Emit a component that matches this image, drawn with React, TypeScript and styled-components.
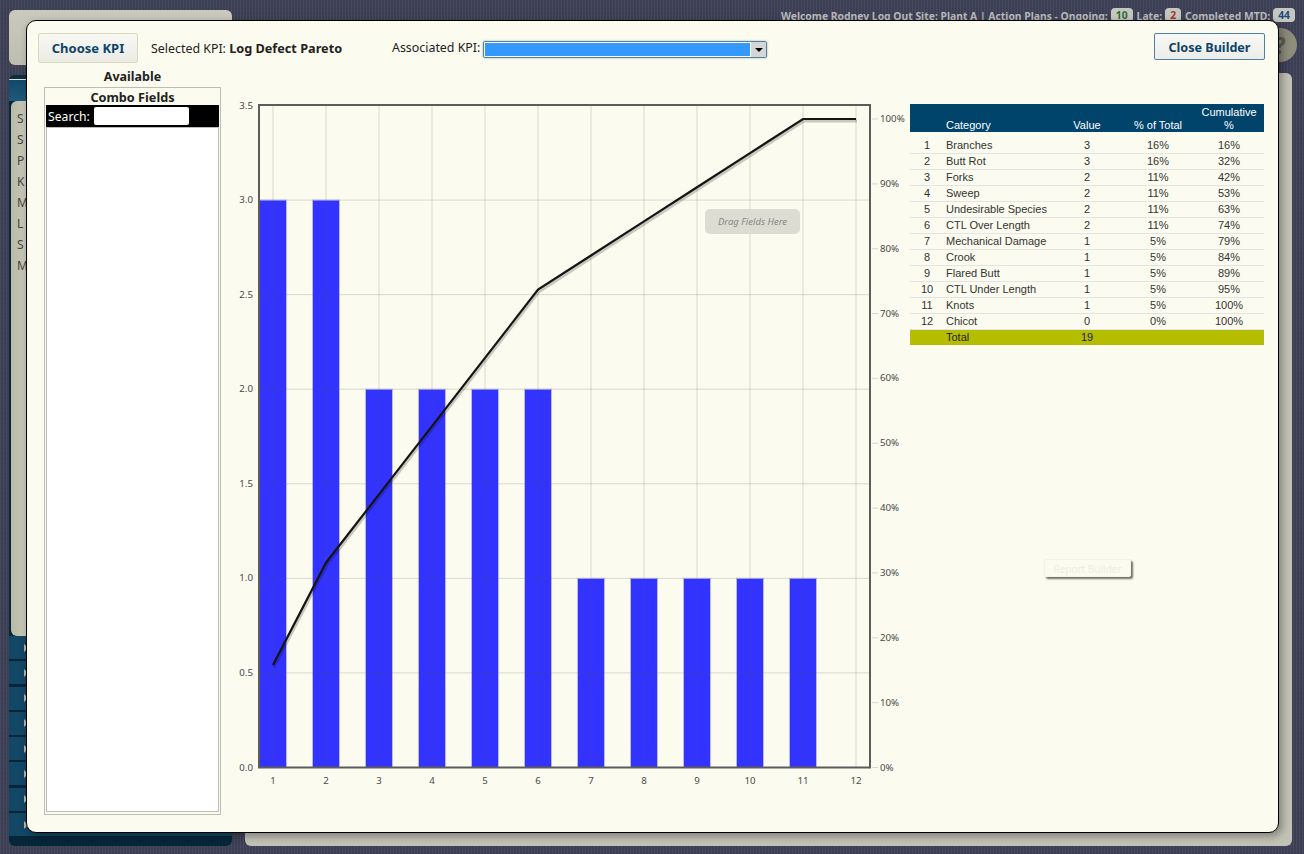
import React from 'react';
import styled, { createGlobalStyle } from 'styled-components';

const GlobalStyle = createGlobalStyle`
  html, body {
    margin: 0;
    padding: 0;
    height: 854px;
    overflow: hidden;
    font-family: "Noto Sans", "Liberation Sans", sans-serif;
  }
`;

const PARETO = [
  { cat: 'Branches', value: 3, pct: '16%', cum: '16%' },
  { cat: 'Butt Rot', value: 3, pct: '16%', cum: '32%' },
  { cat: 'Forks', value: 2, pct: '11%', cum: '42%' },
  { cat: 'Sweep', value: 2, pct: '11%', cum: '53%' },
  { cat: 'Undesirable Species', value: 2, pct: '11%', cum: '63%' },
  { cat: 'CTL Over Length', value: 2, pct: '11%', cum: '74%' },
  { cat: 'Mechanical Damage', value: 1, pct: '5%', cum: '79%' },
  { cat: 'Crook', value: 1, pct: '5%', cum: '84%' },
  { cat: 'Flared Butt', value: 1, pct: '5%', cum: '89%' },
  { cat: 'CTL Under Length', value: 1, pct: '5%', cum: '95%' },
  { cat: 'Knots', value: 1, pct: '5%', cum: '100%' },
  { cat: 'Chicot', value: 0, pct: '0%', cum: '100%' },
];

const TOTAL = 19;
const SIDE_LETTERS = ['S', 'S', 'P', 'K', 'M', 'L', 'S', 'M'];
const VALUE_TICKS = [0, 0.5, 1, 1.5, 2, 2.5, 3, 3.5];
const PCT_TICKS = [0, 10, 20, 30, 40, 50, 60, 70, 80, 90, 100];

const PLOT = { left: 259, right: 870, top: 105.5, bottom: 767.5 };
const xAt = (i: number) => 273 + i * 53;
const yVal = (v: number) => PLOT.bottom - (v / 3.5) * (PLOT.bottom - PLOT.top);
const yPct = (p: number) => 767.5 - p * 6.485;

function ParetoChart() {
  let running = 0;
  const linePoints = PARETO.map((row, i) => {
    running += row.value;
    return `${xAt(i)},${yPct((running / TOTAL) * 100)}`;
  }).join(' ');

  return (
    <ChartSvg viewBox="226 95 684 700" width="684" height="700">
      {PARETO.map((row, i) =>
        row.value > 0 ? (
          <rect
            key={row.cat}
            x={xAt(i) - 13.5}
            y={yVal(row.value)}
            width={27}
            height={PLOT.bottom - yVal(row.value)}
            fill="#3333ff"
            stroke="#b9b9f5"
            strokeWidth="1"
          />
        ) : null,
      )}
      {VALUE_TICKS.slice(1, -1).map((v) => (
        <line key={v} x1={PLOT.left} x2={PLOT.right} y1={yVal(v)} y2={yVal(v)} stroke="#55553a" strokeOpacity="0.2" />
      ))}
      {PARETO.map((_, i) => (
        <line key={i} x1={xAt(i)} x2={xAt(i)} y1={PLOT.top} y2={PLOT.bottom} stroke="#55553a" strokeOpacity="0.2" />
      ))}
      <polyline points={linePoints} transform="translate(1 2)" fill="none" stroke="#000" strokeOpacity="0.2" strokeWidth="3" />
      <polyline points={linePoints} fill="none" stroke="#151515" strokeWidth="2.2" />
      <rect
        x={PLOT.left}
        y={PLOT.top - 0.5}
        width={PLOT.right - PLOT.left}
        height={PLOT.bottom - PLOT.top + 0.5}
        fill="none"
        stroke="#5c5c5c"
        strokeWidth="2"
      />
      {VALUE_TICKS.map((v) => (
        <AxisText key={v} x={253} y={yVal(v) + 3} textAnchor="end">
          {v.toFixed(1)}
        </AxisText>
      ))}
      {PARETO.map((_, i) => (
        <AxisText key={i} x={xAt(i)} y={784} textAnchor="middle">
          {i + 1}
        </AxisText>
      ))}
      {PCT_TICKS.map((p) => (
        <g key={p}>
          <line x1={872} x2={878} y1={yPct(p)} y2={yPct(p)} stroke="#d8d8cc" />
          <AxisText x={880} y={yPct(p) + 3}>
            {p}%
          </AxisText>
        </g>
      ))}
    </ChartSvg>
  );
}

export default function App() {
  return (
    <Page>
      <GlobalStyle />
      <Sidebar>
        <LogoCard />
        <NavPanel>
          <NavHeader />
          <NavCard>
            {SIDE_LETTERS.map((letter, i) => (
              <NavItem key={i}>{letter}</NavItem>
            ))}
          </NavCard>
          {Array.from({ length: 8 }).map((_, i) => (
            <NavRow key={i}>
              <NavArrow />
            </NavRow>
          ))}
        </NavPanel>
      </Sidebar>
      <MainColumn>
        <TopBar>
          Welcome Rodney Log Out Site: Plant A | Action Plans - Ongoing:
          <Badge $color="#2f6b2f">10</Badge>Late:
          <Badge $color="#b03030">2</Badge>Completed MTD:
          <Badge $color="#1f4a80">44</Badge>
        </TopBar>
        <HelpCircle>?</HelpCircle>
        <MainPanel />
      </MainColumn>

      <Modal>
        <Toolbar>
          <ChooseButton>Choose KPI</ChooseButton>
          <SelectedLabel>
            Selected KPI: <strong>Log Defect Pareto</strong>
          </SelectedLabel>
          <AssociatedLabel>Associated KPI:</AssociatedLabel>
          <FakeSelect>
            <SelectValue />
            <SelectArrow />
          </FakeSelect>
          <CloseButton>Close Builder</CloseButton>
        </Toolbar>
        <Workspace>
          <FieldsColumn>
            <FieldsHeading>Available</FieldsHeading>
            <FieldsBox>
              <FieldsTitle>Combo Fields</FieldsTitle>
              <SearchBar>
                Search:
                <SearchInput />
              </SearchBar>
              <FieldsList />
            </FieldsBox>
          </FieldsColumn>
          <ChartArea>
            <ParetoChart />
            <DragHint>Drag Fields Here</DragHint>
          </ChartArea>
          <TableColumn>
            <DataTable>
              <colgroup>
                <col width="34" />
                <col width="108" />
                <col width="70" />
                <col width="72" />
                <col width="70" />
              </colgroup>
              <thead>
                <tr>
                  <HeadCell />
                  <HeadCell $left>Category</HeadCell>
                  <HeadCell>Value</HeadCell>
                  <HeadCell>% of Total</HeadCell>
                  <HeadCell>
                    Cumulative
                    <br />%
                  </HeadCell>
                </tr>
              </thead>
              <tbody>
                {PARETO.map((row, i) => (
                  <BodyRow key={row.cat} $first={i === 0}>
                    <td>{i + 1}</td>
                    <CategoryCell>{row.cat}</CategoryCell>
                    <td>{row.value}</td>
                    <td>{row.pct}</td>
                    <td>{row.cum}</td>
                  </BodyRow>
                ))}
                <TotalRow>
                  <td />
                  <CategoryCell>Total</CategoryCell>
                  <td>{TOTAL}</td>
                  <td />
                  <td />
                </TotalRow>
              </tbody>
            </DataTable>
            <GhostTag>Report Builder</GhostTag>
          </TableColumn>
        </Workspace>
      </Modal>
    </Page>
  );
}

const Page = styled.div`
  position: relative;
  width: 1304px;
  height: 854px;
  overflow: hidden;
  display: flex;
  gap: 13px;
  padding: 10px 12px 8px 9px;
  box-sizing: border-box;
  background-color: #404359;
  background-image:
    repeating-linear-gradient(90deg, rgba(255, 255, 255, 0.035) 0 1px, rgba(0, 0, 0, 0.05) 1px 3px),
    repeating-linear-gradient(0deg, rgba(0, 0, 0, 0.035) 0 1px, transparent 1px 5px);
`;

const Sidebar = styled.div`
  width: 223px;
  display: flex;
  flex-direction: column;
  gap: 10px;
`;

const LogoCard = styled.div`
  height: 55px;
  flex: none;
  border-radius: 6px;
  background: linear-gradient(#c9c9bd, #bdbdb0);
`;

const NavPanel = styled.div`
  flex: 1;
  border-radius: 6px;
  background: #06263a;
  overflow: hidden;
`;

const NavHeader = styled.div`
  height: 26px;
  background: linear-gradient(#0c2e47 0 4px, #e4e0c4 4px 5px, #14486a 5px, #1d5a7c);
`;

const NavCard = styled.div`
  margin-left: 2px;
  height: 535px;
  padding-top: 7px;
  box-sizing: border-box;
  border-radius: 6px 0 6px 6px;
  background: linear-gradient(90deg, #b8b8a6, #c8c8b8 14px);
`;

const NavItem = styled.div`
  height: 21px;
  line-height: 21px;
  padding-left: 6px;
  font-size: 12px;
  color: #444;
`;

const NavRow = styled.div`
  height: 23px;
  margin-bottom: 1.3px;
  display: flex;
  align-items: center;
  padding-left: 15px;
  background: #124766;
  border-bottom: 1px solid #062338;
`;

const NavArrow = styled.span`
  border-left: 4px solid #b5b5aa;
  border-top: 4px solid transparent;
  border-bottom: 4px solid transparent;
`;

const MainColumn = styled.div`
  flex: 1;
  display: flex;
  flex-direction: column;
  position: relative;
`;

const TopBar = styled.div`
  height: 63px;
  flex: none;
  display: flex;
  justify-content: flex-end;
  gap: 3px;
  align-items: flex-start;
  font-size: 10.35px;
  font-weight: 700;
  color: #b9b9bb;
  line-height: 13px;
  white-space: nowrap;
  margin-right: -3px;
`;

const Badge = styled.span<{ $color: string }>`
  margin: -2px 1px 0 0;
  padding: 0 5px;
  height: 14px;
  line-height: 14px;
  border-radius: 4px;
  background: #c4c8c0;
  color: ${(p) => p.$color};

  &:last-child {
    margin-right: 0;
  }
`;

const HelpCircle = styled.div`
  position: absolute;
  right: -5px;
  top: 18px;
  width: 34px;
  height: 34px;
  border-radius: 50%;
  background: #8d8d7c;
  color: #5d5d50;
  font-size: 24px;
  font-weight: 700;
  text-align: center;
  line-height: 34px;
`;

const MainPanel = styled.div`
  flex: 1;
  border-radius: 6px;
  background: #c2c2b6;
`;

const Modal = styled.div`
  position: absolute;
  left: 26px;
  top: 20px;
  width: 1253px;
  height: 813px;
  box-sizing: border-box;
  border: 1px solid #000;
  border-radius: 10px;
  background: #fbfbef;
  box-shadow: 3px 3px 8px rgba(0, 0, 0, 0.35);
  display: flex;
  flex-direction: column;
  overflow: hidden;
`;

const Toolbar = styled.div`
  height: 47px;
  flex: none;
  box-sizing: border-box;
  padding: 12px 13px 0 11px;
  display: flex;
  align-items: flex-start;
  font-size: 12.4px;
  color: #222;
`;

const ChooseButton = styled.button`
  width: 100px;
  height: 30px;
  padding: 0;
  border: 1px solid #dcd8bc;
  border-radius: 2px;
  background: linear-gradient(#f7f7f3, #ebebe6);
  font-family: inherit;
  font-size: 13px;
  font-weight: 700;
  color: #0e4468;
`;

const SelectedLabel = styled.div`
  margin-left: 13px;
  width: 241px;
  line-height: 30px;
  white-space: nowrap;

  strong {
    font-size: 12.7px;
    font-weight: 700;
  }
`;

const AssociatedLabel = styled.div`
  width: 91px;
  line-height: 30px;
  white-space: nowrap;
`;

const FakeSelect = styled.div`
  margin-top: 8px;
  width: 284px;
  height: 17px;
  box-sizing: border-box;
  border: 1px solid #55809c;
  border-radius: 2px;
  background: #fff;
  display: flex;
  box-shadow: 0 0 2px rgba(60, 110, 150, 0.6);
`;

const SelectValue = styled.div`
  flex: 1;
  background: #3399ff;
  margin: 1px;
`;

const SelectArrow = styled.div`
  width: 15px;
  background: #d6d6d6;
  display: flex;
  align-items: center;
  justify-content: center;

  &::after {
    content: '';
    border-top: 4px solid #000;
    border-left: 4px solid transparent;
    border-right: 4px solid transparent;
  }
`;

const CloseButton = styled.button`
  margin-left: auto;
  width: 111px;
  height: 27px;
  padding: 1px 0 0;
  border: 1px solid #4f7fa3;
  border-radius: 2px;
  background: linear-gradient(#f8f8f6, #ecece8);
  font-family: inherit;
  font-size: 12.6px;
  font-weight: 700;
  color: #0e4468;
`;

const Workspace = styled.div`
  flex: 1;
  display: flex;
  padding-left: 17px;
`;

const FieldsColumn = styled.div`
  width: 177px;
  flex: none;
`;

const FieldsHeading = styled.div`
  height: 19px;
  line-height: 17px;
  text-align: center;
  font-size: 12.5px;
  font-weight: 700;
  color: #222;
`;

const FieldsBox = styled.div`
  height: 728px;
  box-sizing: border-box;
  border: 1px solid #bdbdb4;
  padding: 0 1px 2px;
  display: flex;
  flex-direction: column;
`;

const FieldsTitle = styled.div`
  height: 17px;
  line-height: 19px;
  text-align: center;
  font-size: 12.7px;
  font-weight: 700;
  color: #222;
`;

const SearchBar = styled.div`
  height: 22px;
  flex: none;
  display: flex;
  align-items: center;
  gap: 4px;
  padding-left: 2px;
  background: #000;
  color: #fff;
  font-size: 12.2px;
`;

const SearchInput = styled.div`
  width: 95px;
  height: 18px;
  background: #fff;
  border-radius: 2px;
`;

const FieldsList = styled.div`
  flex: 1;
  background: #fff;
  border: 1px solid #bdbdb4;
`;

const ChartArea = styled.div`
  position: relative;
  width: 684px;
  flex: none;
  margin: 27px 0 0 5px;
`;

const ChartSvg = styled.svg`
  display: block;
`;

const AxisText = styled.text`
  font-family: "Noto Sans", "Liberation Sans", sans-serif;
  font-size: 9.7px;
  fill: #4a4a4a;
`;

const DragHint = styled.div`
  position: absolute;
  left: 479px;
  top: 114px;
  width: 95px;
  height: 25px;
  line-height: 25px;
  border-radius: 5px;
  background: #dcdcd2;
  text-align: center;
  font-size: 9.5px;
  font-style: italic;
  color: #888;
`;

const TableColumn = styled.div`
  width: 354px;
  flex: none;
  padding-top: 36px;
`;

const DataTable = styled.table`
  width: 354px;
  table-layout: fixed;
  border-collapse: collapse;
  font-family: "Liberation Sans", Arial, sans-serif;
  font-size: 11px;
  color: #333;
  text-align: center;

  td {
    padding: 0;
  }
`;

const HeadCell = styled.th<{ $left?: boolean }>`
  height: 28px;
  padding: 2px 0 0 ${(p) => (p.$left ? '2px' : '0')};
  box-sizing: border-box;
  background: #00436b;
  color: #fff;
  font-weight: 400;
  line-height: 13px;
  vertical-align: bottom;
  text-align: ${(p) => (p.$left ? 'left' : 'center')};
`;

const BodyRow = styled.tr<{ $first: boolean }>`
  height: ${(p) => (p.$first ? '21px' : '16px')};
  border-bottom: 1px solid #e3e3e6;

  td {
    vertical-align: bottom;
    line-height: 15px;
  }
`;

const CategoryCell = styled.td`
  && {
    text-align: left;
    padding-left: 2px;
    white-space: nowrap;
  }
`;

const TotalRow = styled.tr`
  height: 16px;
  background: #b5bd00;
  color: #222;
`;

const GhostTag = styled.div`
  margin: 214px 0 0 134px;
  width: 87px;
  height: 18px;
  line-height: 18px;
  box-sizing: border-box;
  border: 1px solid #f3f3e6;
  border-radius: 2px;
  text-align: center;
  font-size: 10px;
  color: #eeeee2;
  box-shadow: 2px 2px 2px rgba(0, 0, 0, 0.55);
  background: #fbfbef;
`;
